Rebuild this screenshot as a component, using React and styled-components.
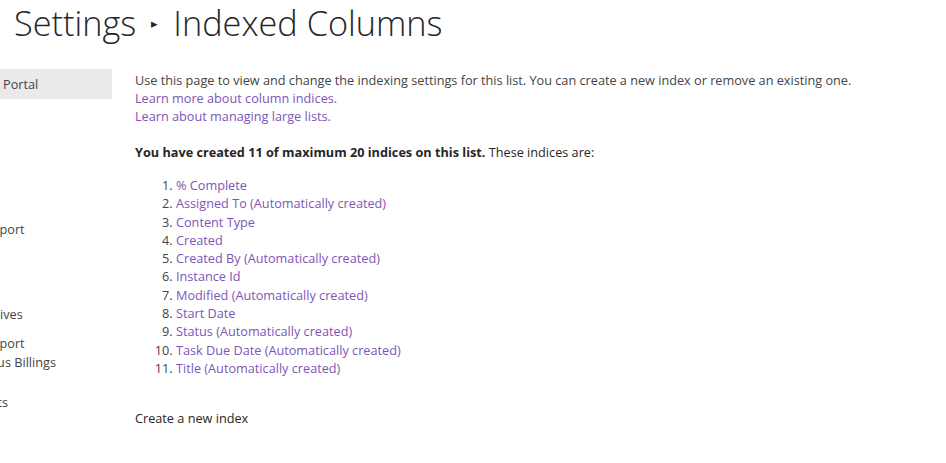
import React from 'react';
import styled, { createGlobalStyle } from 'styled-components';

const GlobalStyle = createGlobalStyle`
    html, body {
        margin: 0;
        padding: 0;
        background: #ffffff;
    }
    body {
        font-family: "Open Sans", "Liberation Sans", sans-serif;
        font-size: 12.7px;
        color: #444444;
        overflow: hidden;
    }
`;

const Page = styled.div`
    width: 946px;
    height: 463px;
    overflow: hidden;
`;

const TitleBar = styled.h1`
    margin: 0;
    padding: 0 0 0 14px;
    height: 69px;
    display: flex;
    align-items: flex-start;
    gap: 15px;
    font-weight: 300;
    font-size: 34.3px;
    line-height: 46px;
    color: #262626;
`;

const Crumb = styled.span`
    white-space: nowrap;
`;

const Arrow = styled.span`
    font-size: 13px;
    color: #262626;
`;

const Body = styled.div`
    display: flex;
    align-items: flex-start;
`;

const Nav = styled.nav`
    width: 112px;
    flex-shrink: 0;
    overflow: hidden;
    display: flex;
    flex-direction: column;
`;

const NavItem = styled.div`
    margin-top: ${props => props.$gap || 0}px;
    height: ${props => props.$selected ? '30px' : '19px'};
    line-height: ${props => props.$selected ? '30px' : '19px'};
    background: ${props => props.$selected ? '#eaeaea' : 'transparent'};
    white-space: nowrap;
    color: #444444;
    padding-left: ${props => props.$selected ? '3px' : '0'};
`;

const NavText = styled.span`
    display: inline-block;
    margin-left: ${props => props.$shift || 0}px;
`;

const Content = styled.main`
    margin-left: 23px;
    padding-top: 2px;
    line-height: 18px;
`;

const Para = styled.p`
    margin: 0;
`;

const Link = styled.a`
    color: #7e55b8;
    text-decoration: none;
    display: block;
`;

const Summary = styled.p`
    margin: 18px 0 0;
    color: #262626;
`;

const IndexList = styled.ol`
    margin: 15px 0 0;
    padding-left: 41px;
    line-height: 18.3px;
    li::marker {
        color: #444444;
    }
`;

const IndexLink = styled.a`
    color: #7e55b8;
    text-decoration: none;
`;

const CreateLink = styled.a`
    display: block;
    margin-top: 32px;
    color: #262626;
    text-decoration: none;
`;

const indices = [
    '% Complete',
    'Assigned To (Automatically created)',
    'Content Type',
    'Created',
    'Created By (Automatically created)',
    'Instance Id',
    'Modified (Automatically created)',
    'Start Date',
    'Status (Automatically created)',
    'Task Due Date (Automatically created)',
    'Title (Automatically created)',
];

const navItems = [
    { label: 'Portal', selected: true },
    { label: 'Support', gap: 121, shift: -23 },
    { label: 'Archives', gap: 66, shift: -27 },
    { label: 'Support', gap: 10, shift: -23 },
    { label: 'Previous Billings', gap: 0, shift: -40 },
    { label: 'Reports', gap: 21, shift: -38 },
];

const App = () => {
    return (
        <>
            <GlobalStyle />
            <Page>
                <TitleBar>
                    <Crumb>Settings</Crumb>
                    <Arrow>&#9656;</Arrow>
                    <Crumb>Indexed Columns</Crumb>
                </TitleBar>
                <Body>
                    {/* left quick launch, scrolled partly out of view */}
                    <Nav>
                        {navItems.map((item, i) => (
                            <NavItem key={i} $selected={item.selected} $gap={item.gap}>
                                <NavText $shift={item.shift}>{item.label}</NavText>
                            </NavItem>
                        ))}
                    </Nav>
                    <Content>
                        <Para>Use this page to view and change the indexing settings for this list. You can create a new index or remove an existing one.</Para>
                        <Link href="#">Learn more about column indices.</Link>
                        <Link href="#">Learn about managing large lists.</Link>
                        <Summary>
                            <b>You have created 11 of maximum 20 indices on this list.</b> These indices are:
                        </Summary>
                        <IndexList>
                            {indices.map(name => (
                                <li key={name}><IndexLink href="#">{name}</IndexLink></li>
                            ))}
                        </IndexList>
                        <CreateLink href="#">Create a new index</CreateLink>
                    </Content>
                </Body>
            </Page>
        </>
    );
};

export default App;
